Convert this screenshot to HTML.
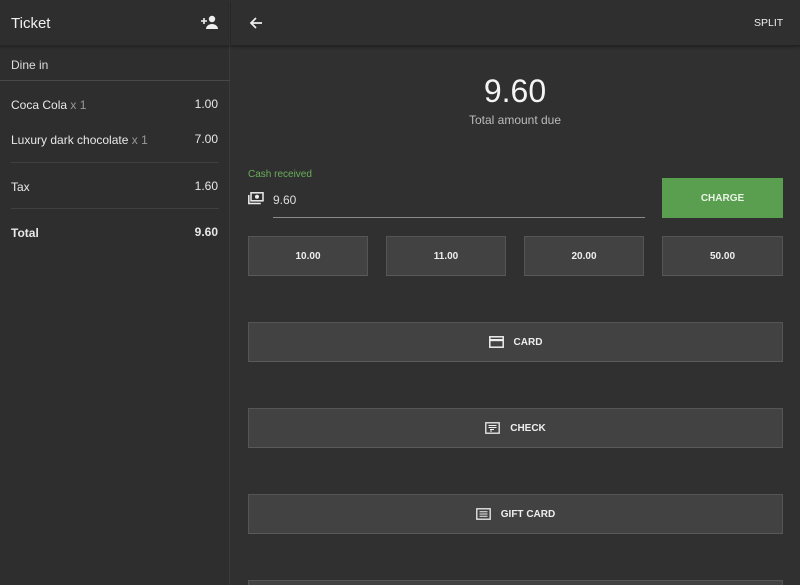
<!DOCTYPE html>
<html><head><meta charset="utf-8"><style>
*{box-sizing:border-box;margin:0;padding:0}
html{height:585px;overflow:hidden}
body{width:800px;height:585px;overflow:hidden;background:#303030;font-family:"Liberation Sans",sans-serif;color:#e8e8e8;position:relative}
.left{position:absolute;left:0;top:0;width:230px;height:585px;background:#2e2e2e;border-right:1px solid #3a3a3a}
.hdr{height:46px;border-bottom:1px solid #262626;position:relative;box-shadow:0 1px 2px rgba(0,0,0,.3)}
.t{position:absolute;font-size:13px}
.line{position:absolute;height:1px;background:#444}
.btn{position:absolute;background:#424242;border:1px solid #555;border-bottom-color:#5a5a5a;color:#eee;font-size:10px;font-weight:bold;display:flex;align-items:center;justify-content:center;gap:10px}
</style></head><body>
<div class="left">
 <div class="hdr">
  <div class="t" style="left:11px;top:15px;font-size:15px;color:#f0f0f0">Ticket</div>
  <svg style="position:absolute;left:201px;top:15px" width="18" height="14" viewBox="0 0 18 14"><path d="M0 6h6M3 3v6" stroke="#eee" stroke-width="1.6"/><circle cx="11" cy="4" r="3.2" fill="#eee"/><path d="M5 14c0-3 3-5 6-5s6 2 6 5z" fill="#eee"/></svg>
 </div>
 <div class="t" style="left:11px;top:58px;font-size:12px;color:#ddd">Dine in</div>
 <div class="line" style="left:0;width:230px;top:80px;background:#484848"></div>
 <div class="t" style="left:11px;top:98px;font-size:12px">Coca Cola <span style="color:#999">x 1</span></div>
 <div class="t" style="right:11px;top:97px;font-size:12px">1.00</div>
 <div class="t" style="left:11px;top:133px;font-size:12px">Luxury dark chocolate <span style="color:#999">x 1</span></div>
 <div class="t" style="right:11px;top:132px;font-size:12px">7.00</div>
 <div class="line" style="left:11px;width:208px;top:162px;background:#404040"></div>
 <div class="t" style="left:11px;top:180px;font-size:12px">Tax</div>
 <div class="t" style="right:11px;top:179px;font-size:12px">1.60</div>
 <div class="line" style="left:11px;width:208px;top:208px;background:#404040"></div>
 <div class="t" style="left:11px;top:226px;font-size:12px;font-weight:bold">Total</div>
 <div class="t" style="right:11px;top:225px;font-size:12px;font-weight:bold">9.60</div>
</div>
<div style="position:absolute;left:231px;top:0;width:569px;height:46px;border-bottom:1px solid #222;box-shadow:0 1px 3px rgba(0,0,0,.35);background:#2f2f2f"></div>
<svg style="position:absolute;left:249px;top:16px" width="14" height="14" viewBox="0 0 14 14"><path d="M13 7H2M7 2L2 7l5 5" stroke="#eee" stroke-width="1.7" fill="none"/></svg>
<div class="t" style="left:754px;top:17px;font-size:10.5px;color:#eee">SPLIT</div>
<div class="t" style="left:400px;width:230px;text-align:center;top:73px;font-size:32px;color:#f4f4f4">9.60</div>
<div class="t" style="left:400px;width:230px;text-align:center;top:113px;font-size:12px;color:#bbb">Total amount due</div>
<div class="t" style="left:248px;top:169px;font-size:10px;color:#6aae5a">Cash received</div>
<svg style="position:absolute;left:248px;top:192px" width="16" height="13" viewBox="0 0 16 13"><rect x="3" y="0.8" width="12" height="8" fill="none" stroke="#eee" stroke-width="1.5"/><circle cx="9" cy="4.8" r="2" fill="#eee"/><path d="M0.8 3v8.5h12" fill="none" stroke="#eee" stroke-width="1.5"/></svg>
<div class="t" style="left:273px;top:193px;font-size:12px;color:#ddd">9.60</div>
<div class="line" style="left:273px;width:372px;top:217px;background:#8a8a8a"></div>
<div class="btn" style="left:662px;top:178px;width:121px;height:40px;background:#5a9e50;border:none;color:#e8f4e4">CHARGE</div>
<div class="btn" style="left:248px;top:236px;width:120px;height:40px">10.00</div>
<div class="btn" style="left:386px;top:236px;width:120px;height:40px">11.00</div>
<div class="btn" style="left:524px;top:236px;width:120px;height:40px">20.00</div>
<div class="btn" style="left:662px;top:236px;width:121px;height:40px">50.00</div>
<div class="btn" style="left:248px;top:322px;width:535px;height:40px"><svg width="15" height="12" viewBox="0 0 15 12"><rect x="0.8" y="0.8" width="13.4" height="10.4" fill="none" stroke="#eee" stroke-width="1.5"/><rect x="1" y="3" width="13" height="2.2" fill="#eee"/></svg>CARD</div>
<div class="btn" style="left:248px;top:408px;width:535px;height:40px"><svg width="15" height="12" viewBox="0 0 15 12"><rect x="0.8" y="0.8" width="13.4" height="10.4" fill="none" stroke="#eee" stroke-width="1.3"/><path d="M3.5 3.5h8M3.5 5.5h8M5 7.5h4M5 9h2" stroke="#eee" stroke-width="1"/></svg>CHECK</div>
<div class="btn" style="left:248px;top:494px;width:535px;height:40px"><svg width="15" height="12" viewBox="0 0 15 12"><rect x="0.8" y="0.8" width="13.4" height="10.4" fill="none" stroke="#eee" stroke-width="1.3"/><path d="M3.5 3.8h8M3.5 6h8M3.5 8.2h8" stroke="#eee" stroke-width="1"/></svg>GIFT CARD</div>
<div class="btn" style="left:248px;top:580px;width:535px;height:5px;border-bottom:none"></div>
</body></html>
